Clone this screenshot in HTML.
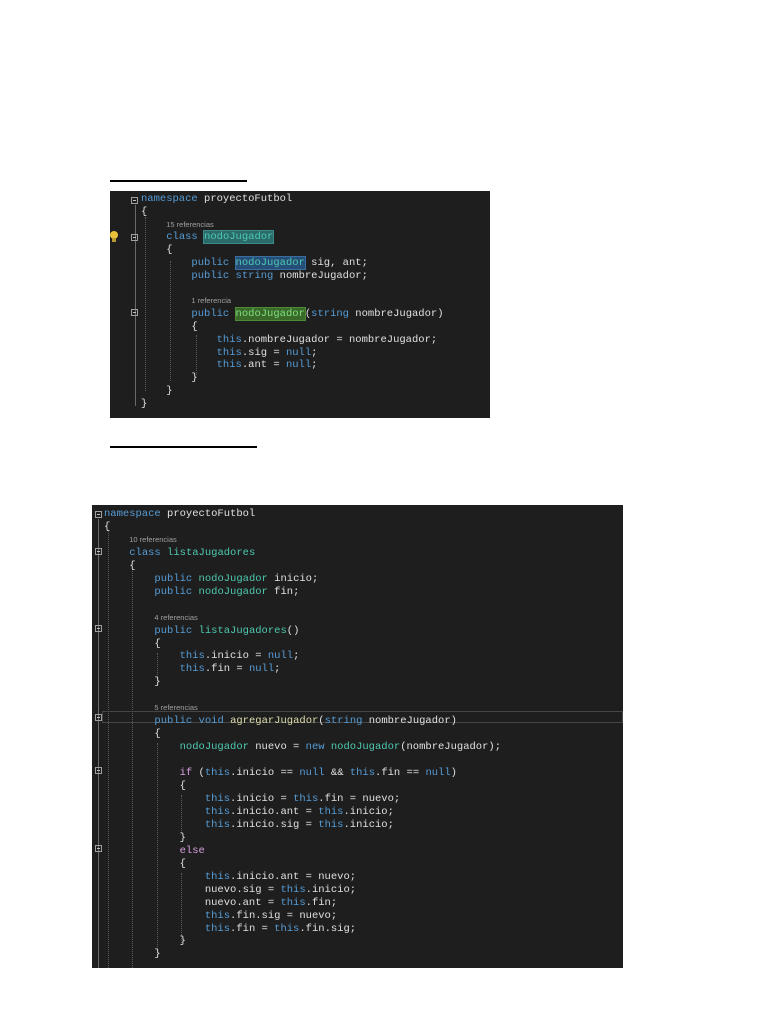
<!DOCTYPE html>
<html><head><meta charset="utf-8"><style>
body{margin:0;background:#fff;width:768px;height:1024px;position:relative;overflow:hidden}
.ul{position:absolute;height:2px;background:#000}
.box{position:absolute;background:#1e1e1e}
.box pre{margin:0;position:absolute;font-family:"Liberation Mono",monospace;font-size:10.5px;color:#e0e0e0;white-space:pre}
.k{color:#569cd6}.t{color:#4ec9b0}.m{color:#dcdcaa}.c{color:#d8a0df}
.r{color:#a0a0a0;font-family:"Liberation Sans",sans-serif;font-size:7.5px}
.f{position:absolute;width:7px;height:7px;border:1px solid #a0a0a0;box-sizing:border-box}
.f:after{content:"";position:absolute;left:1px;right:1px;top:2px;height:1px;background:#c0c0c0}
.g{position:absolute;width:0;border-left:1px dotted #5a5a5a}
.s{position:absolute;width:0;border-left:1px solid #6a6a6a}
</style></head><body>
<div class="ul" style="left:110px;top:180px;width:137px"></div>
<div class="ul" style="left:110px;top:446px;width:147px"></div>

<div class="box" style="left:110px;top:191px;width:380px;height:227px">
<div class="s" style="left:25px;top:14px;height:201px"></div>
<div class="g" style="left:35px;top:26px;height:174px"></div>
<div class="g" style="left:60px;top:70px;height:120px"></div>
<div class="g" style="left:86px;top:144px;height:40px"></div>
<div class="f" style="left:21px;top:6px"></div>
<div class="f" style="left:21px;top:43px"></div>
<div class="f" style="left:21px;top:118px"></div>
<div style="position:absolute;left:0;top:40px;width:8px;height:8px;border-radius:50%;background:#e8c23a"></div>
<div style="position:absolute;left:2px;top:47px;width:4px;height:4px;background:#b89a30"></div>
<pre style="left:31px;top:2px;line-height:12.8px"><span class="k">namespace</span> proyectoFutbol
{
    <span class="r">15 referencias</span>
    <span class="k">class</span> <span class="t" style="background:#2a6b6a;outline:1px solid #3c8a88">nodoJugador</span>
    {
        <span class="k">public</span> <span class="t" style="background:#264f78;outline:1px solid #3a6ea0">nodoJugador</span> sig, ant;
        <span class="k">public</span> <span class="k">string</span> nombreJugador;

        <span class="r">1 referencia</span>
        <span class="k">public</span> <span style="color:#7fe07f;background:#3a6a2a;outline:1px solid #4f8a36">nodoJugador</span>(<span class="k">string</span> nombreJugador)
        {
            <span class="k">this</span>.nombreJugador = nombreJugador;
            <span class="k">this</span>.sig = <span class="k">null</span>;
            <span class="k">this</span>.ant = <span class="k">null</span>;
        }
    }
}</pre>
</div>

<div class="box" style="left:92px;top:505px;width:531px;height:463px">
<div class="s" style="left:6px;top:14px;height:449px"></div>
<div class="g" style="left:16px;top:26px;height:437px"></div>
<div class="g" style="left:40px;top:66px;height:397px"></div>
<div class="g" style="left:65px;top:148px;height:30px"></div>
<div class="g" style="left:65px;top:238px;height:212px"></div>
<div class="g" style="left:89px;top:290px;height:38px"></div>
<div class="g" style="left:89px;top:368px;height:70px"></div>
<div style="position:absolute;left:10px;top:206px;width:521px;height:12px;border:1px solid #464646;box-sizing:border-box"></div>
<div class="f" style="left:3px;top:6px"></div>
<div class="f" style="left:3px;top:43px"></div>
<div class="f" style="left:3px;top:120px"></div>
<div class="f" style="left:3px;top:209px"></div>
<div class="f" style="left:3px;top:262px"></div>
<div class="f" style="left:3px;top:340px"></div>
<pre style="left:12px;top:3px;line-height:12.95px"><span class="k">namespace</span> proyectoFutbol
{
    <span class="r">10 referencias</span>
    <span class="k">class</span> <span class="t">listaJugadores</span>
    {
        <span class="k">public</span> <span class="t">nodoJugador</span> inicio;
        <span class="k">public</span> <span class="t">nodoJugador</span> fin;

        <span class="r">4 referencias</span>
        <span class="k">public</span> <span class="t">listaJugadores</span>()
        {
            <span class="k">this</span>.inicio = <span class="k">null</span>;
            <span class="k">this</span>.fin = <span class="k">null</span>;
        }

        <span class="r">5 referencias</span>
        <span class="k">public</span> <span class="k">void</span> <span class="m">agregarJugador</span>(<span class="k">string</span> nombreJugador)
        {
            <span class="t">nodoJugador</span> nuevo = <span class="k">new</span> <span class="t">nodoJugador</span>(nombreJugador);

            <span class="c">if</span> (<span class="k">this</span>.inicio == <span class="k">null</span> &amp;&amp; <span class="k">this</span>.fin == <span class="k">null</span>)
            {
                <span class="k">this</span>.inicio = <span class="k">this</span>.fin = nuevo;
                <span class="k">this</span>.inicio.ant = <span class="k">this</span>.inicio;
                <span class="k">this</span>.inicio.sig = <span class="k">this</span>.inicio;
            }
            <span class="c">else</span>
            {
                <span class="k">this</span>.inicio.ant = nuevo;
                nuevo.sig = <span class="k">this</span>.inicio;
                nuevo.ant = <span class="k">this</span>.fin;
                <span class="k">this</span>.fin.sig = nuevo;
                <span class="k">this</span>.fin = <span class="k">this</span>.fin.sig;
            }
        }</pre>
</div>
</body></html>
